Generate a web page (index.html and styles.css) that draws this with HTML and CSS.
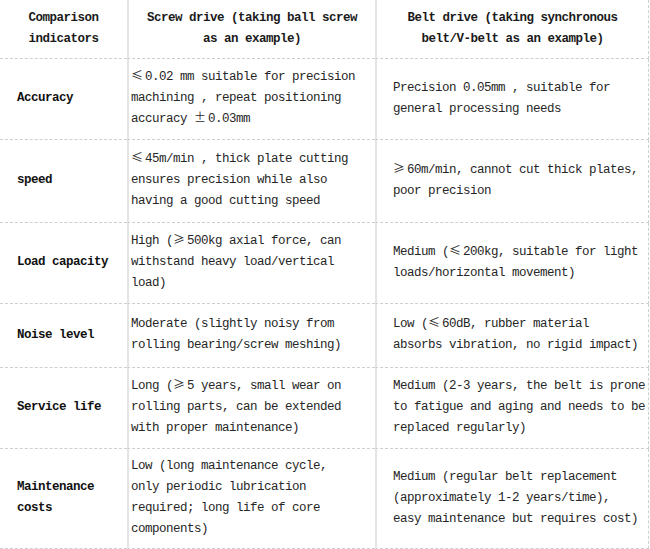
FILE: index.html
```html
<!DOCTYPE html>
<html lang="en">
<head>
<meta charset="utf-8">
<title>Screw drive vs belt drive</title>
<link rel="stylesheet" href="styles.css">
</head>
<body>
<table class="cmp">
  <colgroup>
    <col class="c1"><col class="c2"><col class="c3">
  </colgroup>
  <thead>
    <tr class="head">
      <th>Comparison<br>indicators</th>
      <th>Screw drive (taking ball screw<br>as an example)</th>
      <th>Belt drive (taking synchronous<br>belt/V-belt as an example)</th>
    </tr>
  </thead>
  <tbody>
    <tr class="r3">
      <td class="lbl">Accuracy</td>
      <td class="screw"><span class="sym">≤</span>0.02 mm suitable for precision<br>machining , repeat positioning<br>accuracy <span class="sym">±</span>0.03mm</td>
      <td class="belt">Precision 0.05mm , suitable for<br>general processing needs</td>
    </tr>
    <tr class="r3 tall">
      <td class="lbl">speed</td>
      <td class="screw"><span class="sym">≤</span>45m/min , thick plate cutting<br>ensures precision while also<br>having a good cutting speed</td>
      <td class="belt"><span class="sym">≥</span>60m/min, cannot cut thick plates,<br>poor precision</td>
    </tr>
    <tr class="r3">
      <td class="lbl">Load capacity</td>
      <td class="screw">High (<span class="sym">≥</span>500kg axial force, can<br>withstand heavy load/vertical<br>load)</td>
      <td class="belt">Medium (<span class="sym">≤</span>200kg, suitable for light<br>loads/horizontal movement)</td>
    </tr>
    <tr class="r2">
      <td class="lbl">Noise level</td>
      <td class="screw">Moderate (slightly noisy from<br>rolling bearing/screw meshing)</td>
      <td class="belt">Low (<span class="sym">≤</span>60dB, rubber material<br>absorbs vibration, no rigid impact)</td>
    </tr>
    <tr class="r3">
      <td class="lbl">Service life</td>
      <td class="screw">Long (<span class="sym">≥</span>5 years, small wear on<br>rolling parts, can be extended<br>with proper maintenance)</td>
      <td class="belt">Medium (2-3 years, the belt is prone<br>to fatigue and aging and needs to be<br>replaced regularly)</td>
    </tr>
    <tr class="r4">
      <td class="lbl">Maintenance<br>costs</td>
      <td class="screw">Low (long maintenance cycle,<br>only periodic lubrication<br>required; long life of core<br>components)</td>
      <td class="belt">Medium (regular belt replacement<br>(approximately 1-2 years/time),<br>easy maintenance but requires cost)</td>
    </tr>
  </tbody>
</table>
</body>
</html>
```

FILE: styles.css
```css
html, body {
  margin: 0;
  padding: 0;
  background: #ffffff;
}

.cmp {
  border-collapse: separate;
  border-spacing: 0;
  table-layout: fixed;
  width: 649px;
  font-family: "Liberation Mono", monospace;
  font-size: 12.5px;
  letter-spacing: -0.5px;
  line-height: 21px;
  color: #262626;
}

.c1 { width: 127px; }
.c2 { width: 248px; }
.c3 { width: 274px; }

.cmp th,
.cmp td {
  padding: 8px 0 9px;
  vertical-align: middle;
  white-space: nowrap;
  border-bottom: 1px dashed #cfcfcf;
  text-align: left;
}

.cmp th + th,
.cmp td + td {
  border-left: 2px solid #e4e4e4;
}

.cmp th:last-child,
.cmp td:last-child {
  border-right: 1px dashed #cfcfcf;
}

.head th {
  padding: 8px 0 8px;
  text-align: center;
  font-weight: bold;
  color: #1a1a1a;
}

.lbl {
  padding-left: 17px !important;
  font-weight: bold;
  color: #111111;
}

.screw {
  padding-left: 2px !important;
}

.belt {
  padding-left: 16px !important;
}

.tall td {
  padding-top: 9px;
  padding-bottom: 10px;
}

.r2 td {
  padding-top: 10px;
  padding-bottom: 11px;
}

.r4 td {
  padding-top: 7px;
  padding-bottom: 8px;
}

.sym {
  display: inline-block;
  width: 14px;
  height: 12px;
  line-height: 12px;
  font-family: "Noto Sans CJK SC", sans-serif;
  letter-spacing: 0;
  font-size: 12px;
  text-align: left;
}
```
